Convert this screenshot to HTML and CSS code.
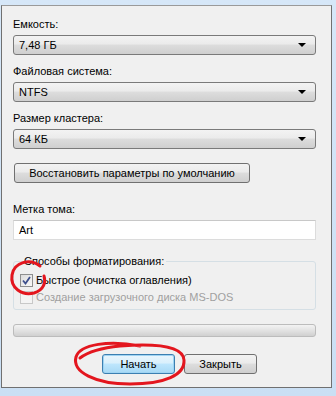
FILE: index.html
```html
<!DOCTYPE html>
<html lang="ru">
<head>
    <meta charset="UTF-8">
    <title>Форматирование</title>
    <link rel="stylesheet" href="styles.css">
</head>
<body>
    <div class="dialog">
        <div class="field">
            <label>Емкость:</label>
            <div class="select">7,48 ГБ<span class="arrow"></span></div>
        </div>
        <div class="field">
            <label>Файловая система:</label>
            <div class="select">NTFS<span class="arrow"></span></div>
        </div>
        <div class="field">
            <label>Размер кластера:</label>
            <div class="select">64 КБ<span class="arrow"></span></div>
        </div>
        <button class="button restore">Восстановить параметры по умолчанию</button>

        <div class="field volume">
            <label>Метка тома:</label>
            <div class="input">Art</div>
        </div>

        <fieldset class="group">
            <legend>Способы форматирования:</legend>
            <div class="check">
                <span class="box checked">
                    <svg width="9" height="9" viewBox="0 0 9 9"><path d="M1 4.5 L3.5 7.5 L8 1" fill="none" stroke="#3d4f8c" stroke-width="1.8"/></svg>
                </span>
                Быстрое (очистка оглавления)
            </div>
            <div class="check disabled">
                <span class="box"></span>
                Создание загрузочного диска MS-DOS
            </div>
        </fieldset>

        <div class="progress"></div>

        <div class="actions">
            <button class="button start">Начать</button>
            <button class="button">Закрыть</button>
        </div>
    </div>

    <!-- red marker circles drawn on top of the screenshot -->
    <svg class="marks" width="336" height="396" viewBox="0 0 336 396">
        <path d="M40 266 C30 258 14 262 12 275 C10 288 22 296 34 293 C44 290 46 282 44 276" fill="none" stroke="#e3161e" stroke-width="3" stroke-linecap="round"/>
        <path d="M140 346 C110 340 80 344 76 357 C72 372 95 384 130 384 C165 384 185 375 184 360 C183 347 160 343 120 346 C100 348 88 352 80 358" fill="none" stroke="#e3161e" stroke-width="3" stroke-linecap="round"/>
    </svg>
</body>
</html>
```

FILE: styles.css
```css
body {
    margin: 0;
    padding: 5px 0 0 1px;
    width: 336px;
    height: 396px;
    box-sizing: border-box;
    background: linear-gradient(180deg, #d6e7f8 0%, #cadff4 100%);
    font-family: "Liberation Sans", Arial, sans-serif;
    font-size: 11px;
    color: #000;
    position: relative;
    overflow: hidden;
}
.dialog {
    width: 331px;
    height: 383px;
    box-sizing: border-box;
    background: #f0f0f0;
    border: 1px solid #707070;
    border-top-color: #9a9a9a;
    padding: 11px 15px 0 11px;
    display: flex;
    flex-direction: column;
}
.field {
    display: flex;
    flex-direction: column;
    gap: 3px;
    margin-bottom: 9px;
}
.field label {
    line-height: 15px;
}
.select {
    height: 20px;
    box-sizing: border-box;
    border: 1px solid #7a7a7a;
    border-radius: 3px;
    background: linear-gradient(180deg, #f3f3f3 0%, #ebebeb 45%, #dddddd 50%, #cfcfcf 100%);
    padding: 0 5px;
    line-height: 18px;
    display: flex;
    justify-content: space-between;
    align-items: center;
}
.arrow {
    width: 0;
    height: 0;
    border-left: 4px solid transparent;
    border-right: 4px solid transparent;
    border-top: 4px solid #000;
    margin-right: 4px;
}
.button {
    font: inherit;
    height: 20px;
    padding: 0;
    box-sizing: border-box;
    border: 1px solid #707070;
    border-radius: 3px;
    background: linear-gradient(180deg, #f2f2f2 0%, #ebebeb 45%, #dddddd 50%, #cfcfcf 100%);
    color: #000;
    line-height: 18px;
    white-space: nowrap;
}
.restore {
    width: 236px;
    margin: 5px 0 0 1px;
}
.volume {
    margin-top: 19px;
}
.input {
    height: 20px;
    box-sizing: border-box;
    border: 1px solid #dcdcdc;
    border-top-color: #c8c8c8;
    background: #fff;
    padding: 0 5px;
    line-height: 18px;
}
.group {
    margin: 5px 0 0;
    padding: 3px 0 4px 6px;
    border: 1px solid #d5dfe5;
    border-radius: 3px;
    min-height: 0;
}
.group legend {
    padding: 0 2px;
    margin-left: 2px;
    line-height: 15px;
}
.check {
    display: flex;
    align-items: center;
    gap: 3px;
    line-height: 16px;
    height: 16px;
}
.check + .check {
    margin-top: 1px;
}
.box {
    width: 13px;
    height: 13px;
    box-sizing: border-box;
    border: 1px solid #8e8f8f;
    background: linear-gradient(135deg, #dcdcdc 0%, #f8f8f8 100%);
    display: flex;
    align-items: center;
    justify-content: center;
}
.disabled {
    color: #a0a0a0;
}
.disabled .box {
    border-color: #c8c8c8;
    background: #f4f4f4;
}
.progress {
    margin-top: 14px;
    height: 13px;
    box-sizing: border-box;
    border: 1px solid #bcbcbc;
    border-radius: 3px;
    background: linear-gradient(180deg, #f3f3f3 0%, #e2e2e2 50%, #d0d0d0 100%);
}
.actions {
    display: flex;
    justify-content: flex-end;
    gap: 9px;
    margin-top: 17px;
    padding-right: 59px;
}
.actions .button {
    width: 73px;
}
.start {
    border-color: #3c7fb1;
    background: linear-gradient(180deg, #eaf6fd 0%, #d9f0fc 45%, #bee6fd 50%, #a7d9f5 100%);
    box-shadow: inset 0 0 0 1px #9fd4f3;
}
.marks {
    position: absolute;
    left: 0;
    top: 0;
}
```
